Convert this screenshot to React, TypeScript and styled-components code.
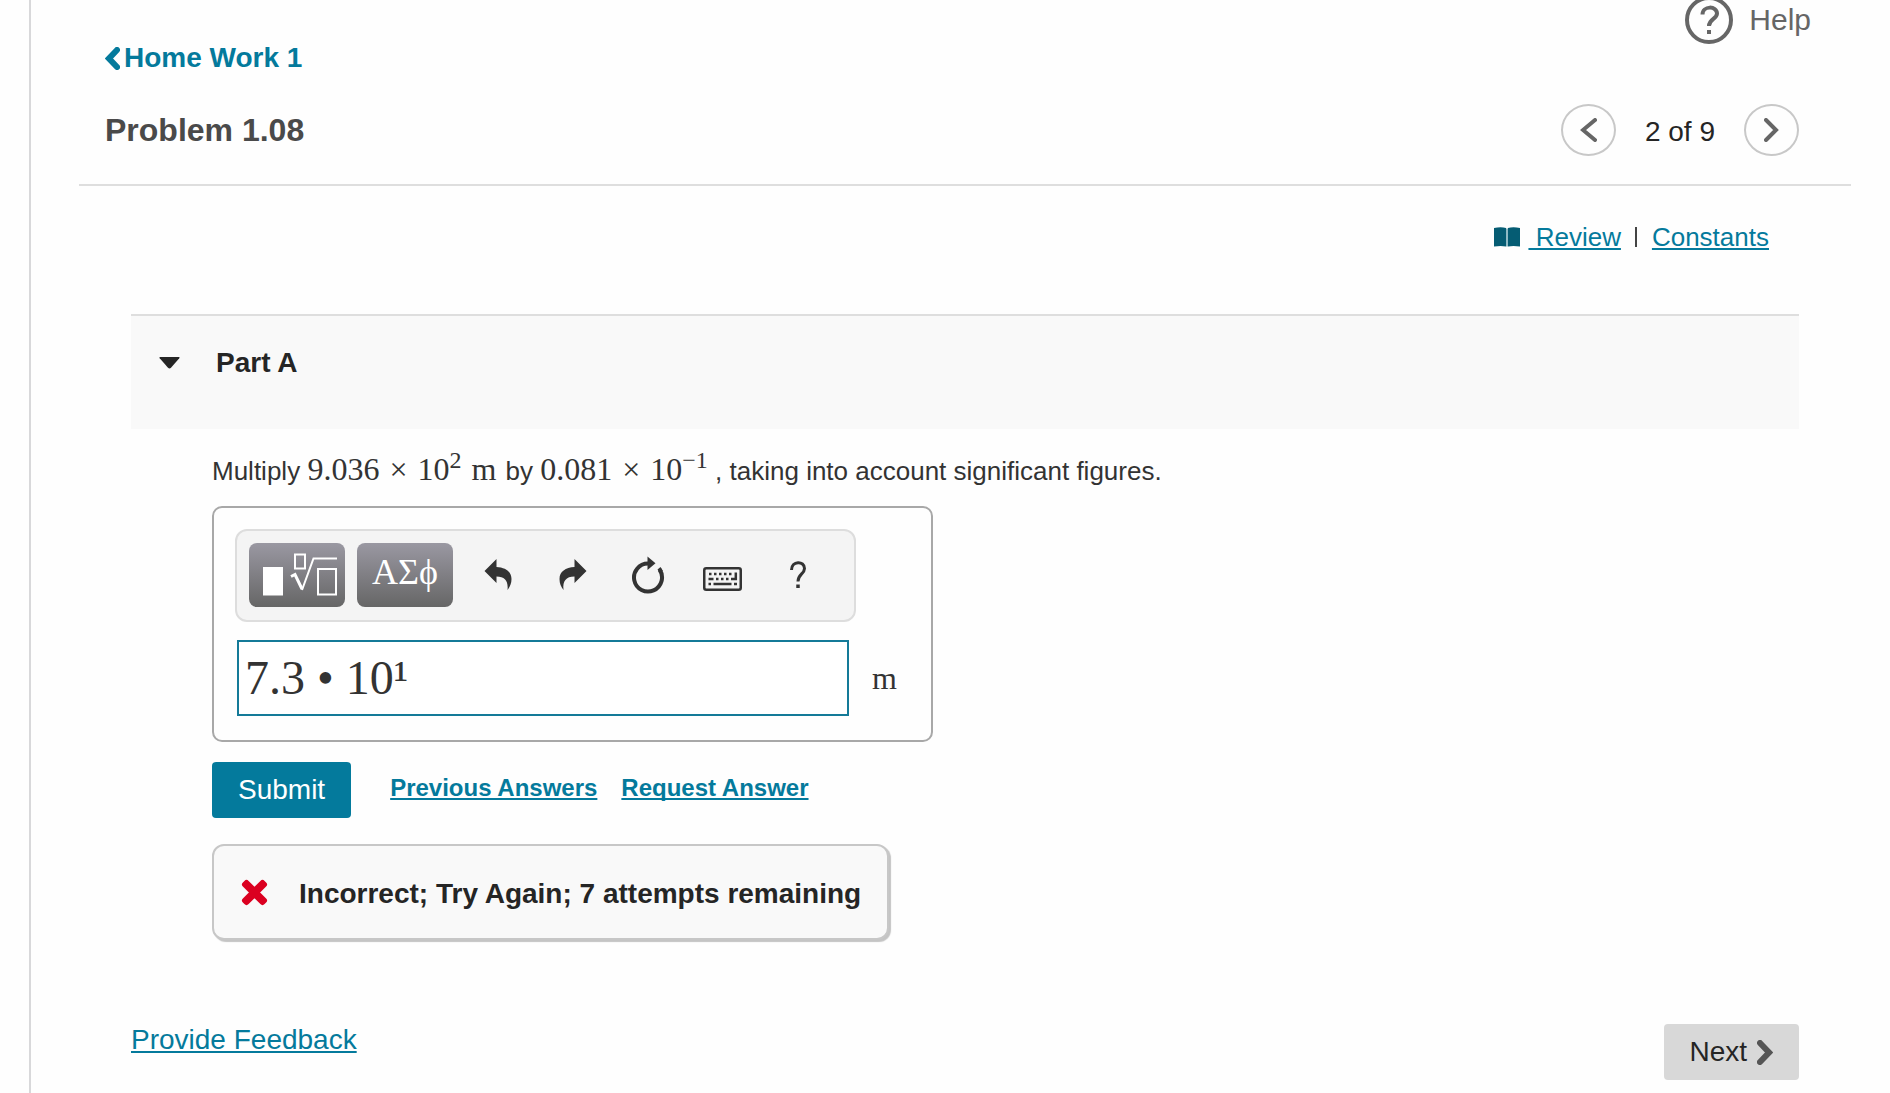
import React from "react";
import styled, { createGlobalStyle, css } from "styled-components";

const teal = "#047a9c";
const ink = "#252525";
const rule = "#dedede";

const GlobalStyle = createGlobalStyle`
  * { box-sizing: border-box; }
  body {
    margin: 0;
    background: #fefefe;
    color: ${ink};
    font-family: "Liberation Sans", Arial, Helvetica, sans-serif;
  }
  button { font: inherit; color: inherit; cursor: pointer; }
  svg { display: block; flex: none; }
`;

const Page = styled.div`
  min-height: 100vh;
  margin-left: 29px;
  padding: 0 39px 12px 48px;
  border-left: 2px solid #d8d8da;
`;

const Header = styled.header`
  display: flex;
  justify-content: space-between;
  padding: 0 40px 28px 26px;
  border-bottom: 2px solid ${rule};
`;

const Titles = styled.div`
  display: flex;
  flex-direction: column;
  gap: 38px;
  padding-top: 42px;
`;

const Crumb = styled.a`
  display: flex;
  align-items: center;
  gap: 4px;
  color: ${teal};
  font-size: 28px;
  font-weight: 700;
  line-height: 32px;
  text-decoration: none;
`;

const Title = styled.h1`
  margin: 0;
  color: #4a4a4a;
  font-size: 32px;
  line-height: 36px;
`;

const Tools = styled.div`
  display: flex;
  flex-direction: column;
  align-items: flex-end;
  gap: 60px;
`;

const Help = styled.a`
  display: flex;
  gap: 16px;
  color: #666;
  font-size: 30px;
  line-height: 40px;
  text-decoration: none;
`;

const Pager = styled.nav`
  display: flex;
  align-items: center;
  gap: 29px;
  margin-right: 12px;
  font-size: 28px;
  line-height: 32px;
`;

const PagerCount = styled.span`
  padding-top: 4px;
`;

const RoundButton = styled.button`
  display: grid;
  place-items: center;
  width: 55px;
  height: 52px;
  padding: 0;
  border: 2px solid #c8c8c8;
  border-radius: 50%;
  background: none;
`;

const Resources = styled.div`
  display: flex;
  align-items: center;
  justify-content: flex-end;
  margin: 36px 82px 62px 0;
  font-size: 26px;
  line-height: 30px;
  white-space: pre;
`;

const Link = styled.a<{ $bold?: boolean }>`
  color: ${teal};
  text-decoration: underline 2px;
  text-underline-offset: 2px;
  text-decoration-skip-ink: none;
  ${(p) =>
    p.$bold &&
    css`
      padding-bottom: 4px;
      font-size: 24px;
      font-weight: 700;
      line-height: 28px;
    `}
`;

const Divider = styled.span`
  width: 2px;
  height: 20px;
  margin: 0 15px 0 14px;
  background: #444;
`;

const BookSlot = styled.span`
  margin-right: 8px;
`;

const Main = styled.main`
  padding: 0 52px;
`;

const PartToggle = styled.button`
  display: flex;
  align-items: center;
  gap: 36px;
  width: 100%;
  padding: 31px 28px 50px;
  border: 0;
  border-top: 2px solid ${rule};
  background: #f9f9f9;
  font-size: 28px;
  font-weight: 700;
  line-height: 32px;
  text-align: left;
`;

const Body = styled.section`
  padding: 22px 0 0 81px;
`;

const Question = styled.p`
  margin: 0 0 17px;
  color: #333;
  font-size: 26px;
  line-height: 36px;
`;

const Maths = styled.span`
  color: #333;
  font-family: "Liberation Serif", "Times New Roman", serif;
  font-size: 32px;
`;

const Times = styled.span`
  padding: 0 10px;
`;

const Unit = styled.span`
  padding: 0 2px;
`;

const Power = styled.sup`
  font-size: 24px;
  line-height: 0;
  vertical-align: 12px;
`;

const AnswerPanel = styled.div`
  width: 721px;
  max-width: 100%;
  padding: 21px 21px 24px;
  border: 2px solid #a8a8a8;
  border-radius: 10px;
`;

const Toolbar = styled.div`
  display: flex;
  gap: 7px;
  width: fit-content;
  padding: 12px 19px 13px 12px;
  border: 2px solid #ddd;
  border-radius: 12px;
  background: #f4f4f4;
`;

const ButtonGroup = styled.div<{ $gap?: number }>`
  display: flex;
  gap: ${(p) => p.$gap ?? 0}px;
`;

const PaletteButton = styled.button`
  display: grid;
  place-items: center;
  width: 96px;
  height: 64px;
  padding: 0;
  border: 0;
  border-radius: 8px;
  background: linear-gradient(#9a98a2, #666);
  color: #fff;
`;

const GreekLabel = styled.span`
  padding-bottom: 6px;
  font-family: "Liberation Serif", "Times New Roman", serif;
  font-size: 36px;
  line-height: 40px;
`;

const IconButton = styled.button`
  display: grid;
  place-items: center;
  width: 75px;
  height: 64px;
  padding: 0;
  border: 0;
  background: none;
  color: #333;
`;

const AnswerRow = styled.div`
  display: flex;
  align-items: center;
  gap: 23px;
  margin: 18px 0 0 2px;
`;

const AnswerInput = styled.input`
  width: 612px;
  min-width: 0;
  height: 76px;
  padding: 0 6px 2px;
  border: 2px solid #147a98;
  outline: 0;
  background: #fff;
  color: #333;
  font-family: "Liberation Serif", "Times New Roman", serif;
  font-size: 48px;
`;

const Actions = styled.div`
  display: flex;
  align-items: center;
  gap: 24px;
  margin-top: 20px;
`;

const Submit = styled.button`
  height: 56px;
  margin-right: 15px;
  padding: 0 26px;
  border: 0;
  border-radius: 4px;
  background: ${teal};
  color: #fff;
  font-size: 28px;
`;

const Feedback = styled.div`
  display: flex;
  align-items: center;
  gap: 31px;
  width: fit-content;
  margin-top: 26px;
  padding: 32px 26px 28px 27px;
  border: 2px solid #c7c7c7;
  border-radius: 12px;
  background: #f9f9f9;
  box-shadow: 2px 2px 1px #c4c4c4;
  font-size: 28px;
  font-weight: 700;
  line-height: 32px;
`;

const Footer = styled.footer`
  display: flex;
  align-items: flex-start;
  justify-content: space-between;
  margin-top: 84px;
  font-size: 28px;
  line-height: 32px;
`;

const Next = styled.button`
  display: flex;
  align-items: center;
  gap: 10px;
  height: 56px;
  padding: 0 26px 0 25px;
  border: 0;
  border-radius: 4px;
  background: #d8d8d8;
`;

function Chevron({ dir, w, h, stroke, color }: { dir: "left" | "right"; w: number; h: number; stroke: number; color: string }) {
  const m = stroke / 2;
  const near = dir === "left" ? w - m : m;
  const tip = dir === "left" ? m + 1 : w - m - 1;
  return (
    <svg width={w} height={h} fill="none" stroke={color} strokeWidth={stroke} strokeLinecap="round" aria-hidden="true">
      <path d={`M${near} ${m} L${tip} ${h / 2} L${near} ${h - m}`} />
    </svg>
  );
}

const HelpIcon = () => (
  <svg width="48" height="44" viewBox="0 0 48 44" fill="none" stroke="#666" aria-hidden="true">
    <circle cx="24" cy="20" r="22" strokeWidth="4" />
    <path d="M17.5 14.5 C17.5 5.5 32 5.5 32 13.5 C32 19 24 19 24 26" strokeWidth="4" />
    <path d="M24 30 V34" strokeWidth="4" />
  </svg>
);

const BookIcon = () => (
  <svg width="26" height="20" viewBox="0 0 26 20" aria-hidden="true">
    <path d="M0 1Q7-.5 12 1V19.500Q7 18.300 0 19.500Z" fill="#055c73" />
    <path d="M26 1Q19-.5 14 1V19.500Q19 18.300 26 19.500Z" fill="#055c73" />
    <path d="M12 1.500H14V19.500H12Z" fill="#8fbac5" />
  </svg>
);

const RootIcon = () => (
  <svg width="96" height="64" viewBox="0 0 96 64" fill="none" stroke="#fff" strokeWidth="2" aria-hidden="true">
    <path d="M14 24H34V52.5H14Z" fill="#fff" stroke="none" />
    <path d="M46 11.5H56V25.5H46Z" />
    <path d="M42 33.5 L46 31.5 L53 46" strokeWidth="3" />
    <path d="M53 47 L64.500 15.500 H88" />
    <path d="M69 26H87V51.500H69Z" />
  </svg>
);

const UndoIcon = ({ flip }: { flip?: boolean }) => (
  <svg width="28" height="32" viewBox="0 0 28 32" fill="currentColor" aria-hidden="true">
    <path
      transform={flip ? "translate(28 0) scale(-1 1)" : undefined}
      d="M.5 12 L12.500 0 V8 C21.500 8.500 27.500 12.500 27.500 20 C27.500 24.500 26 27.500 23.500 31 C24.500 22 21 17.500 12.500 17.500 V24Z"
    />
  </svg>
);

const ResetIcon = () => (
  <svg width="34" height="38" viewBox="0 0 34 38" aria-hidden="true">
    <path d="M17 7.500 A14 14 0 1 0 28.500 13.500" fill="none" stroke="currentColor" strokeWidth="4" />
    <path d="M16.500 .5 L24.500 7.200 L16.500 14Z" fill="currentColor" />
    <path d="M26.500 13.500 L29.500 11 L32 15 L29 17Z" fill="currentColor" />
  </svg>
);

const KeyboardIcon = () => (
  <svg width="39" height="32" viewBox="0 -8 39 32" fill="none" stroke="currentColor" aria-hidden="true">
    <rect x="1.250" y="1.250" width="36.500" height="21.500" rx="2" strokeWidth="2.500" />
    <path d="M6 7H29" strokeWidth="2.500" strokeDasharray="2.500 2.500" />
    <path d="M5.500 12H10.500 M13 12H15.500 M18 12H20.500 M23 12H25.500 M28 12H34" strokeWidth="2.500" />
    <path d="M32.800 5.500V13" strokeWidth="2.500" />
    <path d="M5.500 17H8 M10.500 17H28.500 M31 17H34" strokeWidth="2.500" />
  </svg>
);

const QuestionIcon = () => (
  <svg width="18" height="28" viewBox="0 0 18 28" fill="none" stroke="currentColor" strokeWidth="3" aria-hidden="true">
    <path d="M2.500 9 C2.500 -.5 15.500 -.5 15.500 7.500 C15.500 13 9 13 9 20.500" />
    <path d="M9 23.500V27" strokeWidth="3.500" />
  </svg>
);

const CrossIcon = () => (
  <svg width="27" height="30" viewBox="0 0 27 30" aria-hidden="true">
    <path
      d="M5.500 4L13.500 12L21.500 4L23 5.500L15 13.500L23 21.500L21.500 23L13.500 15L5.500 23L4 21.500L12 13.500L4 5.500Z"
      fill="#db0020"
      stroke="#db0020"
      strokeWidth="6"
      strokeLinejoin="round"
    />
  </svg>
);

const CaretIcon = () => (
  <svg width="21" height="12" viewBox="0 0 21 12" aria-hidden="true">
    <path d="M1 0H20Q21 .3 20.300 1.300L12 10.800Q10.500 12.200 9 10.800L.7 1.300Q0 .3 1 0Z" fill={ink} />
  </svg>
);

export default function App() {
  const [answer, setAnswer] = React.useState("7.3 • 10¹");
  return (
    <>
      <GlobalStyle />
      <Page>
        <Header>
          <Titles>
            <Crumb href="#assignment">
              <Chevron dir="left" w={15} h={23} stroke={6} color={teal} />
              Home Work 1
            </Crumb>
            <Title>Problem 1.08</Title>
          </Titles>
          <Tools>
            <Help href="#help">
              <HelpIcon />
              Help
            </Help>
            <Pager aria-label="Problems">
              <RoundButton aria-label="Previous problem">
                <Chevron dir="left" w={17} h={24} stroke={4} color="#666" />
              </RoundButton>
              <PagerCount>2 of 9</PagerCount>
              <RoundButton aria-label="Next problem">
                <Chevron dir="right" w={15} h={24} stroke={4} color="#666" />
              </RoundButton>
            </Pager>
          </Tools>
        </Header>
        <Resources>
          <BookSlot>
            <BookIcon />
          </BookSlot>
          <Link href="#review"> Review</Link>
          <Divider />
          <Link href="#constants">Constants</Link>
        </Resources>
        <Main>
          <PartToggle aria-expanded="true">
            <CaretIcon />
            Part A
          </PartToggle>
          <Body>
            <Question>
              Multiply{" "}
              <Maths>
                9.036<Times>×</Times>10<Power>2</Power> <Unit>m</Unit>
              </Maths>{" "}
              by{" "}
              <Maths>
                0.081<Times>×</Times>10<Power>−1</Power>
              </Maths>{" "}
              , taking into account significant figures.
            </Question>
            <AnswerPanel>
              <Toolbar role="toolbar">
                <ButtonGroup $gap={12}>
                  <PaletteButton aria-label="Templates">
                    <RootIcon />
                  </PaletteButton>
                  <PaletteButton>
                    <GreekLabel>ΑΣϕ</GreekLabel>
                  </PaletteButton>
                </ButtonGroup>
                <ButtonGroup>
                  <IconButton aria-label="Undo">
                    <UndoIcon />
                  </IconButton>
                  <IconButton aria-label="Redo">
                    <UndoIcon flip />
                  </IconButton>
                  <IconButton aria-label="Reset">
                    <ResetIcon />
                  </IconButton>
                  <IconButton aria-label="Keyboard shortcuts">
                    <KeyboardIcon />
                  </IconButton>
                  <IconButton aria-label="Help">
                    <QuestionIcon />
                  </IconButton>
                </ButtonGroup>
              </Toolbar>
              <AnswerRow>
                <AnswerInput
                  id="answer"
                  aria-label="Answer in metres"
                  value={answer}
                  onChange={(e) => setAnswer(e.target.value)}
                />
                <Maths as="label" htmlFor="answer">
                  m
                </Maths>
              </AnswerRow>
            </AnswerPanel>
            <Actions>
              <Submit>Submit</Submit>
              <Link $bold href="#previous">Previous Answers</Link>
              <Link $bold href="#request">Request Answer</Link>
            </Actions>
            <Feedback role="status">
              <CrossIcon />
              Incorrect; Try Again; 7 attempts remaining
            </Feedback>
          </Body>
          <Footer>
            <Link href="#feedback">Provide Feedback</Link>
            <Next>
              Next
              <Chevron dir="right" w={16} h={25} stroke={6} color="#555" />
            </Next>
          </Footer>
        </Main>
      </Page>
    </>
  );
}
